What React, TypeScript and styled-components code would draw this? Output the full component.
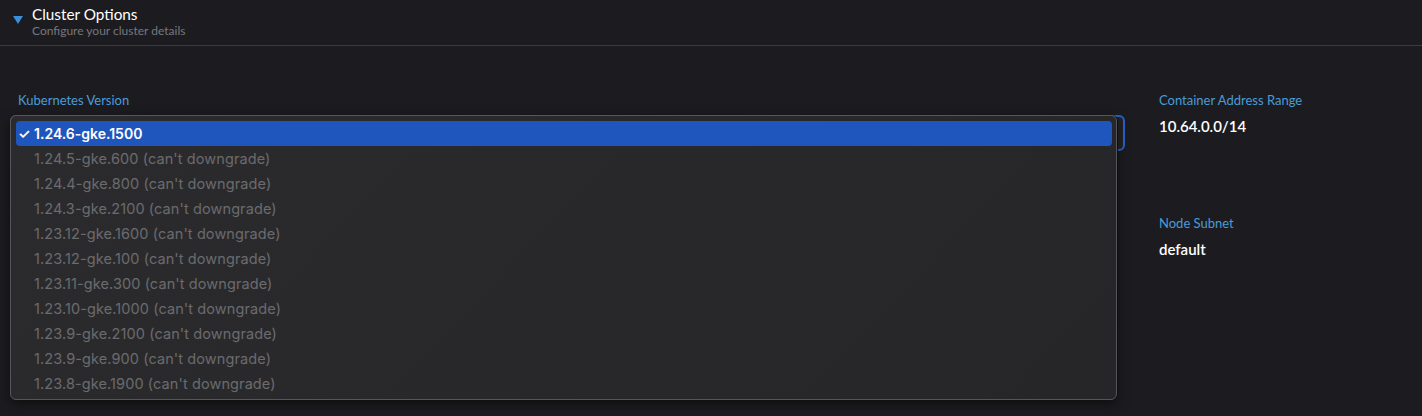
import React from "react";
import styled, { createGlobalStyle } from "styled-components";

const Global = createGlobalStyle`
  html, body { margin: 0; padding: 0; background: #1c1c20; }
  body { font-family: Lato, "Noto Sans", sans-serif; color: #fff; width: 1422px; height: 416px; overflow: hidden; }
`;

const Header = styled.div`
  display: flex;
  align-items: flex-start;
  gap: 9px;
  padding: 4px 13px 0 13px;
  height: 41px;
  border-bottom: 1px solid #3c3c40;
`;

const Caret = styled.div`
  width: 0;
  height: 0;
  margin-top: 12px;
  border-left: 5px solid transparent;
  border-right: 5px solid transparent;
  border-top: 8px solid #3b8ed8;
`;

const TitleBlock = styled.div`
  display: flex;
  flex-direction: column;
`;

const Title = styled.div`
  font-size: 15.3px;
  line-height: 20px;
  color: #fff;
`;

const Subtitle = styled.div`
  font-size: 12px;
  line-height: 14px;
  color: #77777c;
`;

const Body = styled.div`
  display: grid;
  grid-template-columns: 1115px 1fr;
  column-gap: 34px;
  padding: 46px 0 0 10px;
`;

const Column = styled.div`
  display: flex;
  flex-direction: column;
`;

const Label = styled.div<{ $indent?: number }>`
  font-size: 13px;
  line-height: 16px;
  color: #4a9bd9;
  margin-left: ${(p) => p.$indent ?? 0}px;
`;

const Value = styled.div<{ $gap?: number }>`
  font-size: 15px;
  line-height: 18px;
  font-weight: 600;
  color: #fff;
  margin-top: 9px;
  margin-bottom: ${(p) => p.$gap ?? 0}px;
`;

const SelectWrap = styled.div`
  position: relative;
  margin-top: 7px;
`;

const SelectBox = styled.div`
  height: 32px;
  border: 2px solid #2a62c9;
  border-radius: 6px;
  background: #232327;
`;

const Menu = styled.div`
  position: absolute;
  left: 0;
  top: 0;
  width: 1107px;
  box-sizing: border-box;
  padding: 5px 4px 3px 5px;
  border: 1px solid #56565a;
  border-radius: 6px;
  background: linear-gradient(135deg, #2b2b2e 0%, #262628 100%);
  box-shadow: 1px 0 0 #0e0e10, 0 4px 12px rgba(0, 0, 0, 0.5);
  font-family: Inter, "Noto Sans", sans-serif;
`;

const Item = styled.div<{ $selected?: boolean }>`
  display: flex;
  align-items: center;
  height: 25px;
  border-radius: 4px;
  font-size: ${(p) => (p.$selected ? "14px" : "14.5px")};
  letter-spacing: ${(p) => (p.$selected ? "0" : "0.1px")};
  background: ${(p) => (p.$selected ? "#1f56be" : "transparent")};
  color: ${(p) => (p.$selected ? "#ffffff" : "#6b6b6e")};
  font-weight: ${(p) => (p.$selected ? 600 : 400)};
`;

const Check = styled.span`
  width: 18px;
  padding-left: 2px;
  box-sizing: border-box;
  font-size: 14px;
`;

const versions = [
  "1.24.6-gke.1500",
  "1.24.5-gke.600 (can't downgrade)",
  "1.24.4-gke.800 (can't downgrade)",
  "1.24.3-gke.2100 (can't downgrade)",
  "1.23.12-gke.1600 (can't downgrade)",
  "1.23.12-gke.100 (can't downgrade)",
  "1.23.11-gke.300 (can't downgrade)",
  "1.23.10-gke.1000 (can't downgrade)",
  "1.23.9-gke.2100 (can't downgrade)",
  "1.23.9-gke.900 (can't downgrade)",
  "1.23.8-gke.1900 (can't downgrade)",
];

export default function App() {
  return (
    <>
      <Global />
      <Header>
        <Caret />
        <TitleBlock>
          <Title>Cluster Options</Title>
          <Subtitle>Configure your cluster details</Subtitle>
        </TitleBlock>
      </Header>
      <Body>
        <Column>
          <Label $indent={8}>Kubernetes Version</Label>
          <SelectWrap>
            <SelectBox />
            <Menu>
              {versions.map((v, i) => (
                <Item key={v} $selected={i === 0}>
                  <Check>{i === 0 ? "✓" : ""}</Check>
                  {v}
                </Item>
              ))}
            </Menu>
          </SelectWrap>
        </Column>
        <Column>
          <Label>Container Address Range</Label>
          <Value $gap={80}>10.64.0.0/14</Value>
          <Label>Node Subnet</Label>
          <Value>default</Value>
        </Column>
      </Body>
    </>
  );
}
